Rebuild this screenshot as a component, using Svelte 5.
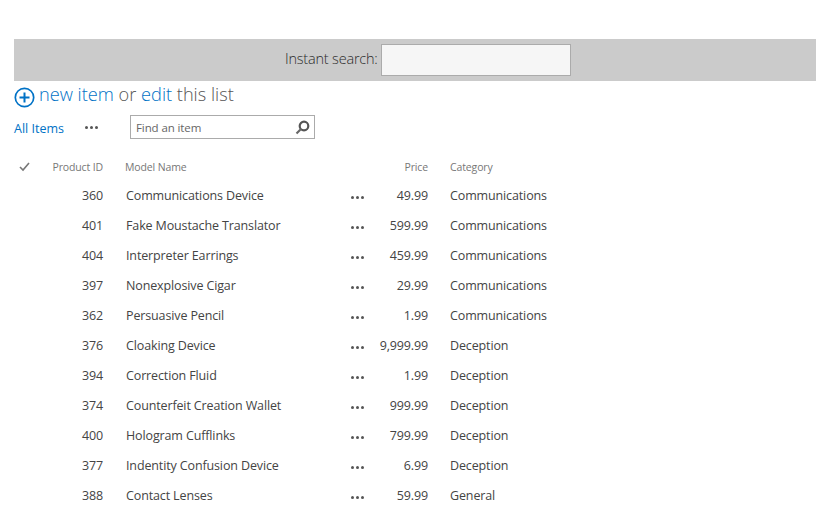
<script lang="ts">
  const items = [
    { id: '360', name: 'Communications Device', price: '49.99', category: 'Communications' },
    { id: '401', name: 'Fake Moustache Translator', price: '599.99', category: 'Communications' },
    { id: '404', name: 'Interpreter Earrings', price: '459.99', category: 'Communications' },
    { id: '397', name: 'Nonexplosive Cigar', price: '29.99', category: 'Communications' },
    { id: '362', name: 'Persuasive Pencil', price: '1.99', category: 'Communications' },
    { id: '376', name: 'Cloaking Device', price: '9,999.99', category: 'Deception' },
    { id: '394', name: 'Correction Fluid', price: '1.99', category: 'Deception' },
    { id: '374', name: 'Counterfeit Creation Wallet', price: '999.99', category: 'Deception' },
    { id: '400', name: 'Hologram Cufflinks', price: '799.99', category: 'Deception' },
    { id: '377', name: 'Indentity Confusion Device', price: '6.99', category: 'Deception' },
    { id: '388', name: 'Contact Lenses', price: '59.99', category: 'General' }
  ];
</script>

<div class="page">
  <div class="search-bar">
    <span class="search-label">Instant search:</span>
    <input class="search-input" type="text" />
  </div>

  <div class="hero">
    <svg class="plus" width="21" height="21" viewBox="0 0 21 21">
      <circle cx="10.5" cy="10.5" r="9.2" fill="none" stroke="#0072c6" stroke-width="1.7" />
      <path d="M10.5 5.5v10M5.5 10.5h10" stroke="#0072c6" stroke-width="2" fill="none" />
    </svg>
    <span class="hero-text"><span class="link">new item</span> or <span class="link">edit</span> this list</span>
  </div>

  <div class="views">
    <span class="view-link">All Items</span>
    <span class="dots view-dots"><i></i><i></i><i></i></span>
    <div class="find">
      <span>Find an item</span>
      <svg width="15" height="15" viewBox="0 0 15 15">
        <circle cx="9" cy="6" r="4.3" fill="none" stroke="#555" stroke-width="2.2" />
        <path d="M6 9l-4.5 4.5" stroke="#666" stroke-width="2.2" fill="none" />
      </svg>
    </div>
  </div>

  <div class="row head">
    <span class="check">
      <svg width="11" height="10" viewBox="0 0 11 10">
        <path d="M1 5l3 3 6-7" fill="none" stroke="#777" stroke-width="1.6" />
      </svg>
    </span>
    <span class="col-id">Product ID</span>
    <span class="col-name">Model Name</span>
    <span class="col-menu"></span>
    <span class="col-price">Price</span>
    <span class="col-cat">Category</span>
  </div>

  {#each items as item}
    <div class="row">
      <span class="check"></span>
      <span class="col-id">{item.id}</span>
      <span class="col-name">{item.name}</span>
      <span class="col-menu"><span class="dots"><i></i><i></i><i></i></span></span>
      <span class="col-price">{item.price}</span>
      <span class="col-cat">{item.category}</span>
    </div>
  {/each}
</div>

<style>
  :global(body) {
    margin: 0;
    background: #fff;
  }
  .page {
    height: 516px;
    overflow: hidden;
    padding: 39px 0 0 14px;
    box-sizing: border-box;
    font-family: "Open Sans", "Noto Sans", sans-serif;
    color: #444;
  }
  .search-bar {
    height: 42px;
    background: #cbcbcb;
    display: flex;
    align-items: center;
    padding-left: 271px;
  }
  .search-label {
    width: 96px;
    font-size: 14.5px;
    letter-spacing: -0.2px;
    color: #2b2b2b;
    font-weight: 300;
    white-space: nowrap;
    margin-bottom: 4px;
  }
  .search-input {
    width: 190px;
    height: 32px;
    box-sizing: border-box;
    background: #f6f6f6;
    border: 1px solid #ababab;
    padding: 0;
    margin: 0;
  }
  .hero {
    height: 30px;
    display: flex;
    align-items: center;
    gap: 4px;
  }
  .plus {
    margin-top: 2px;
    flex-shrink: 0;
  }
  .hero-text {
    font-size: 18.2px;
    font-weight: 300;
    color: #555;
    margin-top: -5px;
  }
  .link {
    color: #0072c6;
  }
  .views {
    height: 32px;
    display: flex;
    align-items: center;
  }
  .view-link {
    width: 71px;
    font-size: 12.5px;
    color: #0072c6;
    margin-top: 2px;
  }
  .view-dots {
    width: 45px;
    margin-top: 1px;
  }
  .find {
    width: 185px;
    height: 24px;
    box-sizing: border-box;
    border: 1px solid #ababab;
    display: flex;
    align-items: center;
    justify-content: space-between;
    padding: 0 4px 0 5px;
    font-size: 11.5px;
    letter-spacing: -0.1px;
    color: #666;
  }
  .dots {
    display: inline-flex;
    gap: 2px;
  }
  .dots i {
    width: 3px;
    height: 3px;
    border-radius: 50%;
    background: #555;
  }
  .row {
    height: 30px;
    display: flex;
    align-items: center;
    font-size: 12.5px;
    letter-spacing: -0.13px;
    white-space: nowrap;
  }
  .head {
    height: 27px;
    margin-top: 10px;
    font-size: 10.5px;
    color: #777;
  }
  .check {
    width: 16px;
    margin-left: 5px;
    display: flex;
    flex-shrink: 0;
  }
  .col-id {
    width: 68px;
    text-align: right;
    flex-shrink: 0;
  }
  .col-name {
    width: 248px;
    padding-left: 23px;
    box-sizing: border-box;
    flex-shrink: 0;
  }
  .head .col-name {
    padding-left: 22px;
  }
  .col-menu {
    width: 23px;
    display: flex;
    align-items: center;
    margin-top: 5px;
    flex-shrink: 0;
  }
  .col-price {
    width: 54px;
    text-align: right;
    flex-shrink: 0;
  }
  .col-cat {
    padding-left: 22px;
  }
</style>
